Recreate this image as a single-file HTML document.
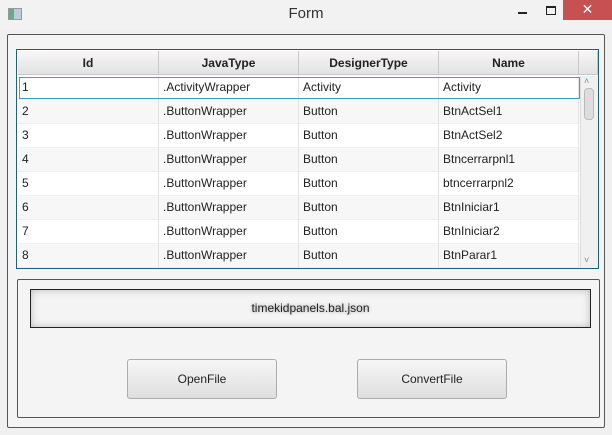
<!DOCTYPE html>
<html><head><style>
body{margin:0;width:612px;height:435px;background:#f0f0f0;font-family:"Liberation Sans",sans-serif;position:relative;overflow:hidden;font-size:12px;color:#222}
.a{position:absolute;box-sizing:border-box}
.title{left:0;top:0;width:612px;height:30px;background:#f2f2f2;text-align:center;line-height:28px;font-size:15px;color:#333}
.th{top:51px;height:24px;background:linear-gradient(#f7f7f7,#e2e2e2);border-right:1px solid #c8c8c8;border-bottom:1px solid #c8c8c8;font-weight:bold;text-align:center;line-height:24px;font-size:12px}
.cell{height:24px;line-height:23px;padding-left:4px;border-right:1px solid #e4e4e4;border-bottom:1px solid #eee;font-size:12px}
.btn{top:359px;width:150px;height:40px;border:1px solid #acacac;border-radius:3px;background:linear-gradient(#f6f6f6,#dedede);text-align:center;line-height:38px;font-size:12px}
</style></head><body>
<div class="a title">Form</div>
<div class="a" style="left:8px;top:8px;width:14px;height:12px;border:1px solid #999;background:linear-gradient(90deg,#6a8 0 40%,#bcd 40%)"></div>
<div class="a" style="left:518px;top:12px;width:9px;height:2px;background:#222"></div>
<div class="a" style="left:546px;top:6px;width:10px;height:9px;border:1px solid #222;border-top-width:2px"></div>
<div class="a" style="left:563px;top:0;width:49px;height:20px;background:#c75050;color:#fff;text-align:center;line-height:19px;font-size:14px">✕</div>
<div class="a" style="left:7px;top:34px;width:598px;height:394px;border:1px solid #555;border-radius:2px;background:#f4f4f4"></div>
<div class="a" style="left:16px;top:49px;width:583px;height:220px;border:1px solid #1f5f80;background:#fff"></div>
<div class="a th" style="left:18px;width:141px">Id</div>
<div class="a th" style="left:159px;width:140px">JavaType</div>
<div class="a th" style="left:299px;width:140px">DesignerType</div>
<div class="a th" style="left:439px;width:140px">Name</div>
<div class="a th" style="left:579px;width:19px"></div>
<div class="a" style="left:580px;top:76px;width:18px;height:192px;background:#f0f0f0;border-left:1px solid #ddd"></div>
<div class="a" style="left:584px;top:88px;width:10px;height:32px;background:#ddd;border:1px solid #bbb;border-radius:4px"></div>
<div class="a" style="left:584px;top:76px;font-size:9px;color:#888">˄</div>
<div class="a" style="left:584px;top:255px;font-size:9px;color:#888">˅</div>
<div id="rows"></div>
<div class="a" style="left:19px;top:77px;width:561px;height:22px;border:1px solid #3aa0d0"></div>
<div class="a" style="left:17px;top:279px;width:583px;height:139px;border:1px solid #555;border-radius:2px;background:#f4f4f4"></div>
<div class="a" style="left:30px;top:289px;width:561px;height:39px;border:1px solid #222;background:#f4f4f4;box-shadow:inset 0 0 8px #bbb;text-align:center;line-height:37px;text-shadow:0 0 3px #999">timekidpanels.bal.json</div>
<div class="a btn" style="left:127px">OpenFile</div>
<div class="a btn" style="left:357px">ConvertFile</div>
<script>
var d=[["1",".ActivityWrapper","Activity","Activity"],["2",".ButtonWrapper","Button","BtnActSel1"],["3",".ButtonWrapper","Button","BtnActSel2"],["4",".ButtonWrapper","Button","Btncerrarpnl1"],["5",".ButtonWrapper","Button","btncerrarpnl2"],["6",".ButtonWrapper","Button","BtnIniciar1"],["7",".ButtonWrapper","Button","BtnIniciar2"],["8",".ButtonWrapper","Button","BtnParar1"]];
var h="",x=[18,159,299,439],w=[141,140,140,140];
d.forEach(function(r,i){var t=76+i*24;h+='<div class="a" style="left:18px;top:'+t+'px;width:562px;height:24px;background:'+(i%2?'#f7f7f7':'#fff')+'"></div>';
r.forEach(function(c,j){h+='<div class="a cell" style="left:'+x[j]+'px;top:'+t+'px;width:'+w[j]+'px">'+c+'</div>'})});
document.getElementById("rows").outerHTML=h;
</script>
</body></html>
